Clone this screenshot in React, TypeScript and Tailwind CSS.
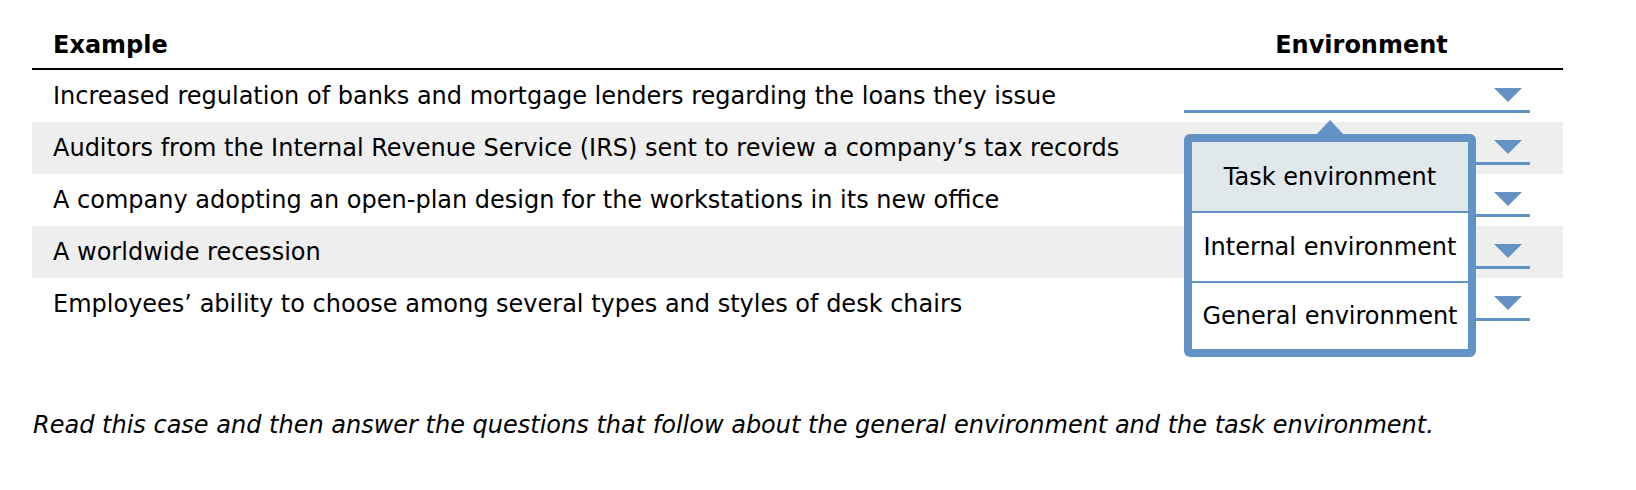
const rows = [
  "Increased regulation of banks and mortgage lenders regarding the loans they issue",
  "Auditors from the Internal Revenue Service (IRS) sent to review a company\u2019s tax records",
  "A company adopting an open-plan design for the workstations in its new office",
  "A worldwide recession",
  "Employees\u2019 ability to choose among several types and styles of desk chairs"
];

const options = [
  { label: "Task environment", cls: "h-[69px] bg-[#e0e8eb]" },
  { label: "Internal environment", cls: "h-[70px] border-t-2 border-[#6392c4]" },
  { label: "General environment", cls: "h-[68px] border-t-2 border-[#6392c4]" }
];

function Arrow() {
  return (
    <svg width="28" height="14" viewBox="0 0 28 14" className="block">
      <polygon points="0,0 28,0 14,14" fill="#6392c4" />
    </svg>
  );
}

function OptionsPopup() {
  return (
    <div className="absolute left-0 top-[64px] z-10 w-[292px]">
      <svg
        width="30"
        height="16"
        viewBox="0 0 30 16"
        className="absolute -top-[14px] left-[131px] block"
      >
        <polygon points="0,16 15,0 30,16" fill="#6392c4" />
      </svg>
      <div className="relative rounded-[6px] border-[8px] border-[#6392c4] bg-white">
        {options.map((option) => (
          <div
            key={option.label}
            className={`flex items-center justify-center text-[24px] leading-[28px] ${option.cls}`}
          >
            {option.label}
          </div>
        ))}
      </div>
    </div>
  );
}

function SelectCell({ open = false }: { open?: boolean }) {
  return (
    <div className="relative ml-[24px] w-[346px]">
      <div className="flex h-[43px] items-start justify-end border-b-[3px] border-[#6392c4] pr-[8px] pt-[18px]">
        <Arrow />
      </div>
      {open ? <OptionsPopup /> : null}
    </div>
  );
}

export default function App() {
  return (
    <div className="h-[490px] w-[1636px] bg-white font-['DejaVu_Sans',sans-serif] text-black">
      <div className="ml-[32px] w-[1531px]">
        <div className="grid h-[70px] grid-cols-[1fr_403px] border-b-2 border-black pt-[31px] text-[24px] font-bold leading-[28px]">
          <div className="pl-[21px]">Example</div>
          <div className="text-center">Environment</div>
        </div>
        {rows.map((text, index) => (
          <div
            key={text}
            className={`grid h-[52px] grid-cols-[1fr_403px] ${
              index % 2 === 1 ? "bg-[#eeeeee]" : ""
            }`}
          >
            <div className="flex items-center pl-[21px] text-[24px] leading-[28px]">
              {text}
            </div>
            <div>
              <SelectCell open={index === 0} />
            </div>
          </div>
        ))}
      </div>
      <p className="ml-[33px] mt-[81px] text-[24px] italic leading-[28px]">
        Read this case and then answer the questions that follow about the general environment and
        the task environment.
      </p>
    </div>
  );
}
